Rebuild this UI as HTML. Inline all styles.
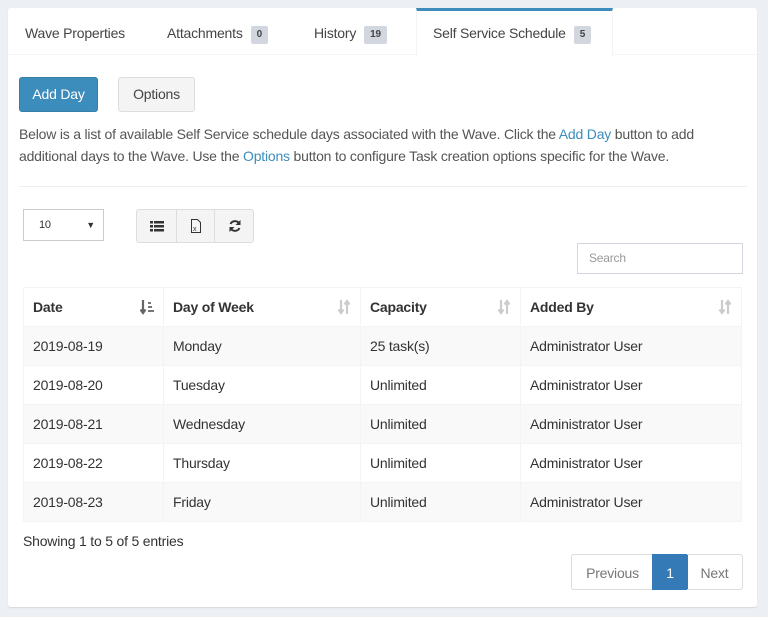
<!DOCTYPE html>
<html><head><style>
*{box-sizing:border-box;margin:0;padding:0}
body{width:768px;height:617px;background:#ecf0f5;font-family:"Liberation Sans",sans-serif;font-size:13.5px;color:#333;position:relative;overflow:hidden;letter-spacing:-0.2px}
.panel{position:absolute;left:8px;top:8px;width:749px;height:599px;background:#fff;border-radius:3px;box-shadow:0 1px 1px rgba(0,0,0,.1)}
.abs{position:absolute}
.tabs{position:absolute;left:0;top:0;width:749px;height:47px;border-bottom:1px solid #f4f4f4}
.tab{position:absolute;top:0;height:47px;line-height:50px;color:#444;font-size:14px}
.tab.active{left:408px;width:197px;border-top:3px solid #3c8dbc;border-left:1px solid #f4f4f4;border-right:1px solid #f4f4f4;background:#fff;height:48px;line-height:44px;padding-left:16px}
.badge{display:inline-block;background:#d2d6de;color:#444;font-size:10px;font-weight:bold;padding:2px 6px;border-radius:2px;margin-left:8px;line-height:14px;vertical-align:1px}
.btn{position:absolute;height:35px;border-radius:3px;font-size:14px;line-height:33px;text-align:center}
a{color:#3c8dbc;text-decoration:none}
table{position:absolute;left:15px;top:279px;width:719px;border-collapse:collapse}
td,th{border:1px solid #f4f4f4;height:39px;padding:0 9px;text-align:left;font-size:14px}
th{font-weight:bold;position:relative}
tbody tr:nth-child(odd){background:#f9f9f9}
.sort{position:absolute;right:9px;top:11px}
.pg{position:absolute;top:546px;height:36px;line-height:36px;font-size:14px;text-align:center;color:#777;border:1px solid #ddd}
</style></head><body>
<div class="panel">
 <div class="tabs">
  <div class="tab" style="left:17px">Wave Properties</div>
  <div class="tab" style="left:159px">Attachments<span class="badge">0</span></div>
  <div class="tab" style="left:306px">History<span class="badge">19</span></div>
  <div class="tab active">Self Service Schedule<span class="badge">5</span></div>
 </div>
 <div class="btn" style="left:11px;top:69px;width:79px;background:#3c8dbc;color:#fff;border:1px solid #367fa9">Add Day</div>
 <div class="btn" style="left:110px;top:69px;width:77px;background:#f4f4f4;color:#444;border:1px solid #ddd">Options</div>
 <div class="abs" style="left:11px;top:115px;width:720px;line-height:22px;font-size:14px;color:#555">Below is a list of available Self Service schedule days associated with the Wave. Click the <a>Add Day</a> button to add additional days to the Wave. Use the <a>Options</a> button to configure Task creation options specific for the Wave.</div>
 <div class="abs" style="left:11px;top:178px;width:728px;border-top:1px solid #eee"></div>
 <div class="abs" style="left:15px;top:201px;width:81px;height:32px;border:1px solid #ccc;font-size:11px;line-height:30px;padding-left:15px">10<span style="position:absolute;right:8px;font-size:9px">▼</span></div>
 <div class="abs" style="left:128px;top:201px;width:118px;height:34px;background:#f4f4f4;border:1px solid #ddd;border-radius:3px">
  <div class="abs" style="left:39px;top:0;height:32px;border-left:1px solid #ddd"></div>
  <div class="abs" style="left:77px;top:0;height:32px;border-left:1px solid #ddd"></div>
  <svg class="abs" style="left:13px;top:10px" width="14" height="12"><rect x="0" y="1" width="3" height="2.5" fill="#333"/><rect x="4" y="1" width="10" height="2.5" fill="#333"/><rect x="0" y="5" width="3" height="2.5" fill="#333"/><rect x="4" y="5" width="10" height="2.5" fill="#333"/><rect x="0" y="9" width="3" height="2.5" fill="#333"/><rect x="4" y="9" width="10" height="2.5" fill="#333"/></svg>
  <svg class="abs" style="left:53px;top:8px" width="12" height="16"><path d="M1.5 1.5h6l3 3v10h-9z" fill="none" stroke="#333"/><text x="3" y="13" font-size="7" font-family="Liberation Sans" fill="#333">x</text></svg>
  <svg class="abs" style="left:91px;top:9px" width="14" height="14"><path d="M11.5 5A5 5 0 0 0 2.5 5M2.5 9A5 5 0 0 0 11.5 9" fill="none" stroke="#333" stroke-width="2"/><path d="M12.5 1v5h-5z M1.5 13v-5h5z" fill="#333"/></svg>
 </div>
 <div class="abs" style="left:569px;top:235px;width:166px;height:31px;border:1px solid #d2d6de;font-size:12px;color:#999;line-height:29px;padding-left:11px">Search</div>
 <table>
  <thead><tr>
   <th style="width:140px">Date<svg class="sort" width="14" height="16"><path d="M3 1v12M0.5 10.5L3 14l2.5-3.5" fill="none" stroke="#666" stroke-width="2.2"/><rect x="8" y="3" width="3" height="2" fill="#777"/><rect x="8" y="7" width="4" height="2" fill="#777"/><rect x="8" y="11" width="6" height="2" fill="#777"/></svg></th>
   <th style="width:197px">Day of Week<svg class="sort" width="14" height="16"><path d="M4 1v12M1.5 10.5L4 14l2.5-3.5M10 15V3M7.5 5.5L10 2l2.5 3.5" fill="none" stroke="#ccc" stroke-width="2.2"/></svg></th>
   <th style="width:160px">Capacity<svg class="sort" width="14" height="16"><path d="M4 1v12M1.5 10.5L4 14l2.5-3.5M10 15V3M7.5 5.5L10 2l2.5 3.5" fill="none" stroke="#ccc" stroke-width="2.2"/></svg></th>
   <th>Added By<svg class="sort" width="14" height="16"><path d="M4 1v12M1.5 10.5L4 14l2.5-3.5M10 15V3M7.5 5.5L10 2l2.5 3.5" fill="none" stroke="#ccc" stroke-width="2.2"/></svg></th>
  </tr></thead>
  <tbody>
   <tr><td>2019-08-19</td><td>Monday</td><td>25 task(s)</td><td>Administrator User</td></tr>
   <tr><td>2019-08-20</td><td>Tuesday</td><td>Unlimited</td><td>Administrator User</td></tr>
   <tr><td>2019-08-21</td><td>Wednesday</td><td>Unlimited</td><td>Administrator User</td></tr>
   <tr><td>2019-08-22</td><td>Thursday</td><td>Unlimited</td><td>Administrator User</td></tr>
   <tr><td>2019-08-23</td><td>Friday</td><td>Unlimited</td><td>Administrator User</td></tr>
  </tbody>
 </table>
 <div class="abs" style="left:15px;top:525px;font-size:14px">Showing 1 to 5 of 5 entries</div>
 <div class="pg" style="left:563px;width:82px;border-radius:3px 0 0 3px;border-right:none">Previous</div>
 <div class="pg" style="left:644px;width:36px;background:#337ab7;border-color:#337ab7;color:#fff">1</div>
 <div class="pg" style="left:679px;width:56px;border-radius:0 3px 3px 0;border-left:none">Next</div>
</div>
</body></html>
